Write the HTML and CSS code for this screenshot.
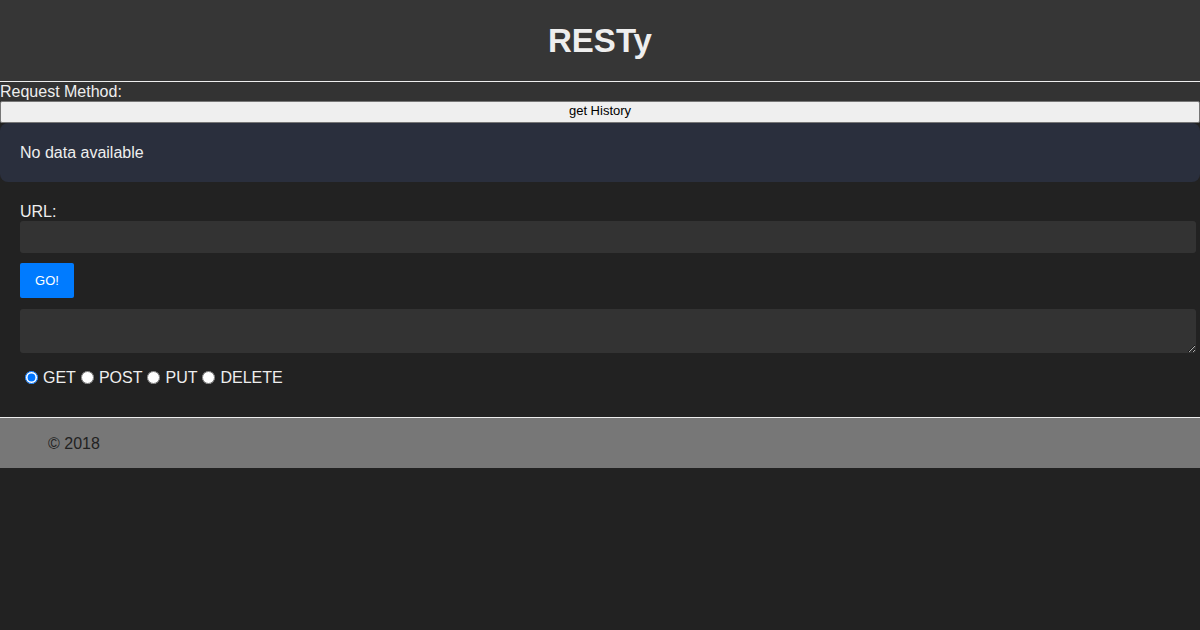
FILE: index.html
```html
<!DOCTYPE html>
<html>
<head>
<meta charset="utf-8">
<title>RESTy</title>
<link rel="stylesheet" href="styles.css">
</head>
<body>
<header class="site-header">
  <h1 class="title">RESTy</h1>
</header>
<section class="method">
  <div class="method-label">Request Method:</div>
  <button class="history-btn" type="button">get History</button>
</section>
<div class="panel">No data available</div>
<form class="req-form">
  <label class="url-label" for="url">URL:</label>
  <input class="url-input" id="url" type="text">
  <button class="go-btn" type="button">GO!</button>
  <textarea class="body-input"></textarea>
  <div class="methods"><input type="radio" name="m" id="get" checked><label for="get">GET</label><input type="radio" name="m" id="post"><label for="post">POST</label><input type="radio" name="m" id="put"><label for="put">PUT</label><input type="radio" name="m" id="del"><label for="del">DELETE</label></div>
</form>
<footer class="site-footer">© 2018</footer>
</body>
</html>
```

FILE: styles.css
```css
html, body {
  margin: 0;
  padding: 0;
  background: #222222;
  color: #eeeeee;
  font-family: "Liberation Sans", Arial, sans-serif;
  font-size: 16px;
}
.site-header {
  background: #363636;
  height: 81px;
  border-bottom: 1px solid #eeeeee;
  display: flex;
  align-items: center;
  justify-content: center;
}
.title {
  margin: 0;
  font-size: 33px;
  font-weight: bold;
  color: #eeeeee;
}
.method {
  background: #333333;
}
.method-label {
  line-height: 19px;
}
.history-btn {
  display: block;
  width: 100%;
  height: 22px;
  margin: 0;
  background: #efefef;
  border: 1px solid #767676;
  border-radius: 2px;
  color: #000;
  font-family: "Liberation Sans", Arial, sans-serif;
  font-size: 13px;
  line-height: 18px;
  padding: 0 0 2px 0;
}
.panel {
  background: #2a2f3d;
  border-radius: 8px;
  padding: 20px;
  line-height: 19px;
  color: #eeeeee;
}
.req-form {
  padding: 20px 20px 30px 20px;
  display: flex;
  flex-direction: column;
  align-items: flex-start;
}
.url-label {
  line-height: 19px;
}
.url-input {
  box-sizing: content-box;
  width: 100%;
  height: 16px;
  padding: 8px;
  border: none;
  border-radius: 3px;
  background: #333333;
  color: #eee;
  margin: 0;
  font-family: inherit;
  font-size: 16px;
}
.go-btn {
  margin-top: 10px;
  width: 54px;
  height: 35px;
  background: #007bff;
  color: #ffffff;
  border: none;
  border-radius: 2px;
  font-family: "Liberation Sans", Arial, sans-serif;
  font-size: 13px;
  padding: 0;
}
.body-input {
  box-sizing: content-box;
  margin: 11px 0 0 0;
  width: 100%;
  height: 28px;
  padding: 8px;
  border: none;
  border-radius: 3px;
  background: #333333;
  color: #eee;
  display: block;
  font-family: inherit;
}
.methods {
  margin-top: 15px;
  display: flex;
  align-items: center;
  line-height: 19px;
}
.methods input {
  margin: 0 5px 0 5px;
  width: 13px;
  height: 13px;
}
.methods label {
  color: #eeeeee;
}
.site-footer {
  border-top: 1px solid #eeeeee;
  background: #777777;
  color: #222222;
  height: 50px;
  line-height: 52px;
  padding-left: 48px;
}
```
